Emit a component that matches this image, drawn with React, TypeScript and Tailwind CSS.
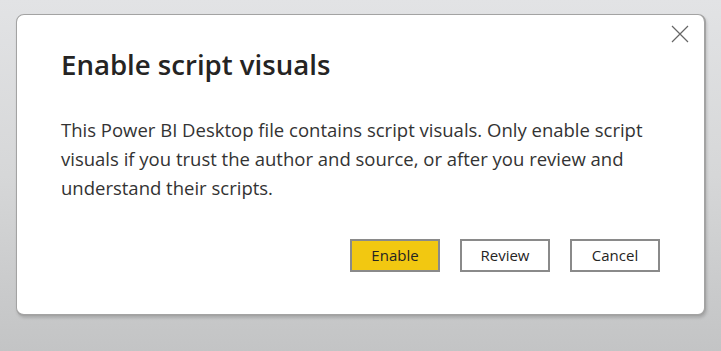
export default function App() {
  return (
    <div className="w-[721px] h-[351px] overflow-hidden bg-gradient-to-b from-[#e2e3e5] via-[#d6d7d8] to-[#c3c4c5] pt-[14px] pl-[16px] font-['Open_Sans',sans-serif]">
      <div className="relative w-[690px] h-[302px] rounded-[8px] bg-white border-2 border-t border-l border-[#a3a3a3] shadow-[1px_2px_3px_rgba(0,0,0,0.15)] pl-[44px] pr-[44px] pt-[31px]">
        <button className="absolute top-[10px] right-[15px] w-[18px] h-[18px] text-[#666]">
          <svg viewBox="0 0 18 18" width="18" height="18" fill="none" stroke="currentColor" strokeWidth="1.2">
            <path d="M1 1 L17 17 M17 1 L1 17" />
          </svg>
        </button>
        <h1 className="text-[27.6px] font-semibold leading-[36px] text-[#252423]">Enable script visuals</h1>
        <p className="mt-[33px] w-[590px] text-[18.5px] leading-[29px] text-[#333]">
          This Power BI Desktop file contains script visuals. Only enable script visuals if you trust the author and source, or after you review and understand their scripts.
        </p>
        <div className="mt-[37px] flex justify-end gap-[20px]">
          <button className="w-[90px] h-[33px] border-2 border-[#8a8a8a] bg-[#f2c811] text-[15px] text-[#252423]">Enable</button>
          <button className="w-[90px] h-[33px] border-2 border-[#8a8a8a] bg-white text-[15px] text-[#252423]">Review</button>
          <button className="w-[90px] h-[33px] border-2 border-[#8a8a8a] bg-white text-[15px] text-[#252423]">Cancel</button>
        </div>
      </div>
    </div>
  );
}
